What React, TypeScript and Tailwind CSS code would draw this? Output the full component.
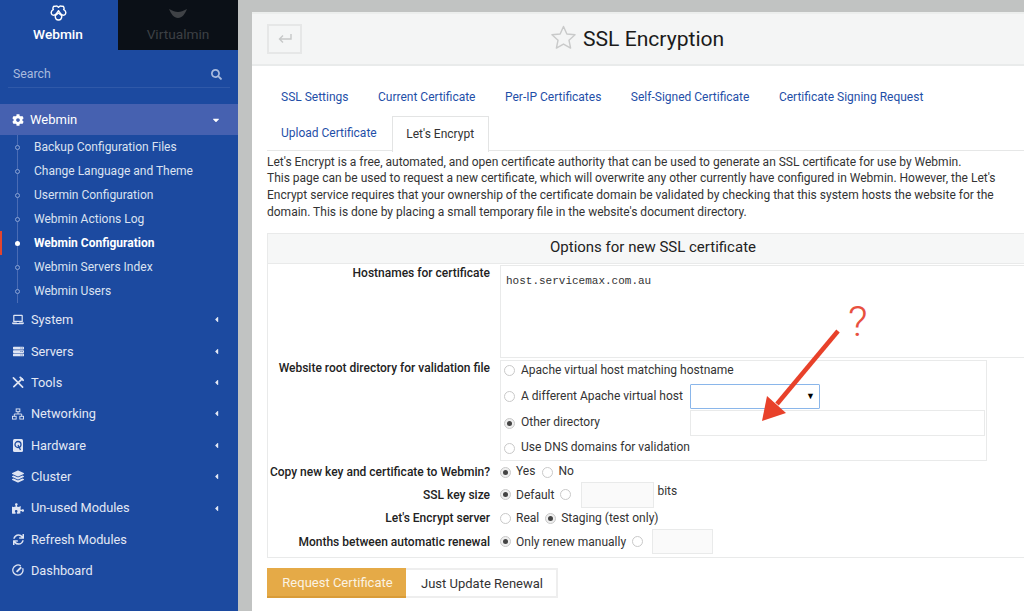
import React from "react";
import { FaCog, FaLaptop, FaServer, FaLayerGroup, FaPuzzlePiece, FaSync, FaSearch, FaCaretDown, FaCaretLeft } from "react-icons/fa";

const Logo = () => (
  <svg width="17" height="16" viewBox="0 0 18 17" fill="none" stroke="white" strokeWidth="1.500" strokeLinejoin="round">
    <path d="M5 1.500 C3.500 1 2.500 3 3.500 5 C1 6 0.500 9 2.500 10.500 C4.500 11.500 6 10.500 7 9 L9 6 L11 9 C12 10.500 13.500 11.500 15.500 10.500 C17.500 9 17 6 14.500 5 C15.500 3 14.500 1 13 1.500 C11.500 0.800 10 1 9 2.500 C8 1 6.500 0.800 5 1.500 Z" />
    <path d="M5.500 11.500 C5.500 14.500 7 16 9 16 C11 16 12.500 14.500 12.500 11.500 L9 8.500 Z" />
  </svg>
);
const Chevron = () => (
  <svg width="18" height="9" viewBox="0 0 18 9" fill="#3f4246"><path d="M0 0 C4 2 6 3 9 3 C12 3 14 2 18 0 C16 5 13 9 9 9 C5 9 2 5 0 0 Z" /></svg>
);
const Hdd = () => (
  <svg width="10" height="13" viewBox="0 0 10 13"><rect width="10" height="13" rx="1.500" fill="#dfe5f3" /><circle cx="5" cy="5.500" r="3" fill="none" stroke="#1c4aa0" strokeWidth="1.300" /><path d="M5 6 L7.500 11" stroke="#1c4aa0" strokeWidth="1.200" /></svg>
);
const Gauge = () => (
  <svg width="13" height="13" viewBox="0 0 13 13" fill="none" stroke="#dfe5f3"><path d="M9.500 1.500 A5.500 5.500 0 1 0 11.500 4" strokeWidth="1.400" /><path d="M5 8 L10 3" strokeWidth="2" /></svg>
);
const Net = () => (
  <svg width="13" height="12" viewBox="0 0 13 12" fill="none" stroke="#dfe5f3" strokeWidth="1"><rect x="4.500" y="0.500" width="4" height="3" /><rect x="0.500" y="8.500" width="4" height="3" /><rect x="8.500" y="8.500" width="4" height="3" /><path d="M6.500 3.500 V6 M2.500 8.500 V6 H10.500 V8.500" /></svg>
);
const Tools = () => (
  <svg width="13" height="13" viewBox="0 0 13 13" fill="none" stroke="#dfe5f3" strokeLinecap="round"><path d="M2 11 L11 2.500" strokeWidth="1.800" /><path d="M1.500 1.500 L11.500 11.500" strokeWidth="1.800" /><path d="M9 1 L12 4" strokeWidth="2" /></svg>
);

const subs = ["Backup Configuration Files", "Change Language and Theme", "Usermin Configuration", "Webmin Actions Log", "Webmin Configuration", "Webmin Servers Index", "Webmin Users"];
const menus: [string, React.ReactNode, boolean][] = [
  ["System", <FaLaptop size={13} />, true],
  ["Servers", <FaServer size={11} />, true],
  ["Tools", <Tools />, true],
  ["Networking", <Net />, true],
  ["Hardware", <Hdd />, true],
  ["Cluster", <FaLayerGroup size={13} />, true],
  ["Un-used Modules", <FaPuzzlePiece size={13} />, true],
  ["Refresh Modules", <FaSync size={11} />, false],
  ["Dashboard", <Gauge />, false],
];

const Sidebar = () => (
  <aside className="w-[238px] shrink-0 h-full bg-[#1c4aa0] flex flex-col text-[#e3e8f4]">
    <div className="flex h-[50px]">
      <div className="w-[116px] flex flex-col items-center text-white font-medium text-[13.700px]">
        <div className="h-[21px] flex items-end"><Logo /></div>
        <div className="mt-[5px] leading-[17px]">Webmin</div>
      </div>
      <div className="ml-[2px] w-[120px] bg-[#0b1017] flex flex-col items-center text-[#3d4045] text-[13.700px]">
        <div className="h-[18px] flex items-end"><Chevron /></div>
        <div className="mt-[8px] leading-[17px]">Virtualmin</div>
      </div>
    </div>
    <div className="mx-[8px] h-[38px] border-b border-[#2f59a9] pl-[5px] pr-[8px] flex items-center justify-between pt-[12px] text-[12.300px] text-[#a9bbde]">
      <span>Search</span>
      <FaSearch size={11} />
    </div>
    <div className="mt-[16px] h-[31px] bg-[#4661b0] pl-[12px] pr-[17px] flex items-center text-[13px] text-white">
      <FaCog size={12} />
      <span className="ml-[6px] flex-1">Webmin</span>
      <FaCaretDown size={10} />
    </div>
    <div className="relative h-[168px]">
      <div className="absolute left-[16.500px] top-0 h-full w-px bg-[#4a6cb5]" />
      {subs.map((s) => {
        const active = s === "Webmin Configuration";
        return (
          <div key={s} className={`relative h-[24px] flex items-center text-[12px] ${active ? "font-bold text-white" : "text-[#dbe2f1]"}`}>
            {active && <div className="absolute left-0 top-0 w-[2px] h-full bg-[#e2452f]" />}
            <span className={`absolute left-[15px] w-[5px] h-[5px] rounded-full ${active ? "bg-white" : "bg-[#1c4aa0] border border-[#8ba3d4]"}`} />
            <span className="ml-[34px]">{s}</span>
          </div>
        );
      })}
    </div>
    <div className="mt-[1px]">
      {menus.map(([name, icon, arrow]) => (
        <div key={name} className="h-[31.400px] pl-[12px] pr-[17px] flex items-center text-[12.750px]">
          <span className="w-[12px] flex justify-center text-[#dfe5f3]">{icon}</span>
          <span className="ml-[7px] flex-1">{name}</span>
          {arrow && <FaCaretLeft size={9} />}
        </div>
      ))}
    </div>
  </aside>
);

const Radio = ({ on = false }: { on?: boolean }) => (
  <span className={`w-[11px] h-[11px] shrink-0 rounded-full border border-[#c9c9c9] flex items-center justify-center ${on ? "bg-[#efefef]" : "bg-white"}`}>
    {on && <span className="w-[5px] h-[5px] rounded-full bg-[#444]" />}
  </span>
);

const Row = ({ label, h, children, top = "items-center" }: { label: string; h: string; children: React.ReactNode; top?: string }) => (
  <div className={`flex ${h} ${top}`}>
    <div className="w-[222px] shrink-0 text-right font-medium text-[12px] text-[#222] whitespace-nowrap">{label}</div>
    <div className="ml-[10px] flex-1 flex items-center h-full text-[12px] text-[#333]">{children}</div>
  </div>
);

const Annotation = () => (
  <div className="absolute left-[755px] top-[300px] w-[120px] h-[130px]">
    <svg width="120" height="130" viewBox="0 0 120 130">
      <path d="M83 31 L22 104" stroke="#e8412a" strokeWidth="4.500" />
      <path d="M7 121 L12 96 L31 113 Z" fill="#e8412a" />
    </svg>
    <span className="absolute left-[93px] top-[-2px] text-[#e8513f] text-[43px] font-light leading-[46px]">?</span>
  </div>
);

export default function App() {
  return (
    <div className="relative w-[1024px] h-[611px] overflow-hidden flex bg-[#c1c3c2] font-['Roboto',sans-serif]">
      <Sidebar />
      <main className="ml-[14px] mt-[12px] flex-1 min-w-0 bg-white">
        <div className="h-[54px] border-t-[2px] border-b-[2px] border-t-[#eceeed] border-b-[#e9ebeb] bg-[#f4f5f5] flex items-center pl-[15px]">
          <div className="w-[35px] h-[30px] border-2 border-[#e6e7e7] flex items-center justify-center">
            <svg width="14" height="10" viewBox="0 0 14 10" fill="none" stroke="#c6c8c8" strokeWidth="1.400"><path d="M13 0 V5 H1.500 M5 1.500 L1.500 5 L5 8.500" /></svg>
          </div>
          <div className="ml-[249px] flex items-center">
            <svg width="25" height="24" viewBox="0 0 26 25" fill="none" stroke="#c9caca" strokeWidth="1.500" strokeLinejoin="round" className="mb-[4px]"><path d="M13 1.500 L16.500 9.300 L25 10.200 L18.700 15.800 L20.400 24 L13 19.800 L5.600 24 L7.300 15.800 L1 10.200 L9.500 9.300 Z" /></svg>
            <h1 className="ml-[7px] text-[21.100px] leading-[26px] text-[#1b1b1b]">SSL Encryption</h1>
          </div>
        </div>
        <div className="pl-[15px]">
          <nav className="text-[12px] text-[#1f4fa8]">
            <div className="h-[50px] flex items-end pb-[10px]">
              {["SSL Settings", "Current Certificate", "Per-IP Certificates", "Self-Signed Certificate", "Certificate Signing Request"].map((t) => (
                <span key={t} className="ml-[14px] mr-[15.500px] whitespace-nowrap">{t}</span>
              ))}
            </div>
            <div className="h-[35px] flex border-b border-[#e6e7e7]">
              <span className="ml-[14px] mr-[15px] mt-[8px] whitespace-nowrap">Upload Certificate</span>
              <span className="h-[36px] w-[97px] pb-[2px] border border-b-0 border-[#e3e4e4] bg-white text-[#333] flex items-center justify-center whitespace-nowrap">Let's Encrypt</span>
            </div>
          </nav>
          <p className="text-[12px] leading-[16.700px] text-[#333] w-[740px] mt-[2.500px]">
            Let's Encrypt is a free, automated, and open certificate authority that can be used to generate an SSL certificate for use by Webmin.<br />
            This page can be used to request a new certificate, which will overwrite any other currently have configured in Webmin. However, the Let's Encrypt service requires that your ownership of the certificate domain be validated by checking that this system hosts the website for the domain. This is done by placing a small temporary file in the website's document directory.
          </p>
          <section className="mt-[12.500px] w-[800px] border border-[#e9eaea] h-[325px]">
            <div className="h-[30px] pb-[2px] border-b border-[#e9eaea] bg-[#f6f7f7] w-[770px] flex items-center justify-center text-[15px] text-[#222]">Options for new SSL certificate</div>
            <Row label="Hostnames for certificate" h="h-[95px]" top="items-start">
              <div className="w-full h-[93px] mt-[1px] border border-[#e9eaea] pl-[5px] pt-[8px] font-['Liberation_Mono'] text-[11px] leading-[14px] text-[#333] self-start">host.servicemax.com.au</div>
            </Row>
            <Row label="Website root directory for validation file" h="h-[103px]" top="items-start">
              <div className="w-[487px] h-[101px] mt-[1px] border border-[#e9eaea] pl-[3px] self-start flex flex-col text-[12px]">
                <div className="h-[20px] flex items-center"><Radio /><span className="ml-[6px] mb-[2px]">Apache virtual host matching hostname</span></div>
                <div className="h-[28px] flex items-center mt-[2px]"><Radio /><span className="ml-[6px] w-[169px] mb-[2px]">A different Apache virtual host</span>
                  <span className="w-[130px] h-[25px] border border-[#8ab6ea] rounded-[1px] flex items-center justify-end pr-[4px] text-[9px] text-black">▼</span>
                </div>
                <div className="h-[26px] flex items-center"><Radio on /><span className="ml-[6px] w-[169px] mb-[2px]">Other directory</span>
                  <span className="w-[295px] h-[26px] border border-[#e9eaea]" />
                </div>
                <div className="h-[24px] flex items-center"><Radio /><span className="ml-[6px] mb-[2px]">Use DNS domains for validation</span></div>
              </div>
            </Row>
            <Row label="Copy new key and certificate to Webmin?" h="h-[21px]">
              <Radio on /><span className="ml-[5px] mb-[2px]">Yes</span><span className="ml-[7px]"><Radio /></span><span className="ml-[5px] mb-[2px]">No</span>
            </Row>
            <Row label="SSL key size" h="h-[24px]">
              <Radio on /><span className="ml-[5px] mt-[1px]">Default</span><span className="ml-[6px]"><Radio /></span>
              <span className="ml-[10px] w-[73px] h-[26px] border border-[#e9eaea] bg-[#fafafa]" /><span className="ml-[3px] mb-[8px]">bits</span>
            </Row>
            <Row label="Let's Encrypt server" h="h-[23px]">
              <Radio /><span className="ml-[5px]">Real</span><span className="ml-[6px]"><Radio on /></span><span className="ml-[5px]">Staging (test only)</span>
            </Row>
            <Row label="Months between automatic renewal" h="h-[24px]">
              <Radio on /><span className="ml-[5px] mt-[1px]">Only renew manually</span><span className="ml-[6px]"><Radio /></span>
              <span className="ml-[9px] w-[61px] h-[25px] border border-[#e9eaea] bg-[#fafafa]" />
            </Row>
          </section>
          <div className="mt-[10px] flex text-[13px]">
            <button className="w-[139px] h-[30px] pl-[2px] pt-[1px] bg-[#e5aa47] border-b-2 border-[#d99c38] text-[#fbf3e3]">Request Certificate</button>
            <button className="w-[152px] h-[30px] pl-[2px] pt-[1px] bg-white border-2 border-l-0 border-[#eeeeee] text-[#333]">Just Update Renewal</button>
          </div>
        </div>
      </main>
      <Annotation />
    </div>
  );
}
